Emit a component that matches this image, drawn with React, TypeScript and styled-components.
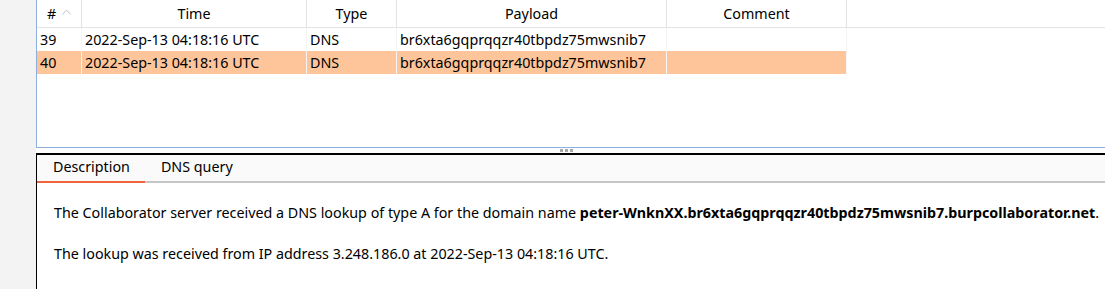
import styled, { createGlobalStyle } from 'styled-components';

const GlobalStyle = createGlobalStyle`
  html, body {
    margin: 0;
    padding: 0;
    background: #ffffff;
  }
  body {
    font-family: "Noto Sans", "Open Sans", sans-serif;
    color: #000000;
  }
`;

type Interaction = {
  id: number;
  time: string;
  type: string;
  payload: string;
  comment: string;
};

const rows: Interaction[] = [
  { id: 39, time: '2022-Sep-13 04:18:16 UTC', type: 'DNS', payload: 'br6xta6gqprqqzr40tbpdz75mwsnib7', comment: '' },
  { id: 40, time: '2022-Sep-13 04:18:16 UTC', type: 'DNS', payload: 'br6xta6gqprqqzr40tbpdz75mwsnib7', comment: '' },
];

const COLUMNS = '45px 225px 90px 270px 180px';

export default function App() {
  const selected = 40;

  return (
    <>
      <GlobalStyle />
      <Page>
        <Gutter />
        <Main>
          <TablePanel>
            <HeaderRow>
              <HeaderCell>
                # <SortArrow width="9" height="6" viewBox="0 0 9 6">
                  <path d="M0.5 5.5 L4.5 1 L8.5 5.5" fill="none" stroke="#c4c4c4" strokeWidth="1" />
                </SortArrow>
              </HeaderCell>
              <HeaderCell>Time</HeaderCell>
              <HeaderCell>Type</HeaderCell>
              <HeaderCell>Payload</HeaderCell>
              <HeaderCell>Comment</HeaderCell>
              <HeaderFiller />
            </HeaderRow>
            {rows.map((r) => (
              <Row key={r.id} $selected={r.id === selected}>
                <Cell>{r.id}</Cell>
                <Cell>{r.time}</Cell>
                <Cell>{r.type}</Cell>
                <Cell>{r.payload}</Cell>
                <Cell>{r.comment}</Cell>
              </Row>
            ))}
          </TablePanel>

          <Splitter>
            <Dot />
            <Dot />
            <Dot />
          </Splitter>

          <DetailPanel>
            <TabBar>
              <Tab $active>Description</Tab>
              <Tab>DNS query</Tab>
            </TabBar>
            <Content>
              <Para>
                The Collaborator server received a DNS lookup of type A for the domain name{' '}
                <b>peter-WnknXX.br6xta6gqprqqzr40tbpdz75mwsnib7.burpcollaborator.net</b>.
              </Para>
              <Para>The lookup was received from IP address 3.248.186.0 at 2022-Sep-13 04:18:16 UTC.</Para>
            </Content>
          </DetailPanel>
        </Main>
      </Page>
    </>
  );
}

const Page = styled('div')`
  display: flex;
  width: 1105px;
  height: 289px;
  overflow: hidden;
`;

const Gutter = styled('div')`
  width: 36px;
  flex-shrink: 0;
  background: #f3f3f3;
`;

const Main = styled('div')`
  flex: 1;
  display: flex;
  flex-direction: column;
  min-width: 0;
`;

const TablePanel = styled('div')`
  height: 147px;
  flex-shrink: 0;
  border-left: 1px solid #8eaedb;
  border-bottom: 1px solid #8eaedb;
  font-size: 14.3px;
`;

const HeaderRow = styled('div')`
  display: grid;
  grid-template-columns: ${COLUMNS} 1fr;
  height: 27px;
  border-bottom: 1px solid #e3e3e3;
`;

const HeaderCell = styled('div')`
  display: flex;
  align-items: center;
  justify-content: center;
  gap: 6px;
  border-right: 1px solid #e3e3e3;
  padding-bottom: 1px;
`;

const HeaderFiller = styled('div')``;

const SortArrow = styled('svg')`
  margin-top: -2px;
`;

const Row = styled('div')<{ $selected?: boolean }>`
  display: grid;
  width: max-content;
  grid-template-columns: ${COLUMNS};
  height: 23px;
  background: ${({ $selected }) => ($selected ? '#ffc59a' : 'transparent')};
`;

const Cell = styled('div')`
  display: flex;
  align-items: center;
  padding-left: 3px;
  border-right: 1px solid #f4f4f4;
  white-space: nowrap;
  overflow: hidden;
`;

const Splitter = styled('div')`
  height: 5px;
  flex-shrink: 0;
  display: flex;
  align-items: center;
  gap: 2px;
  padding-left: 524px;
`;

const Dot = styled('span')`
  width: 3px;
  height: 3px;
  background: #a8a8a8;
`;

const DetailPanel = styled('div')`
  flex: 1;
  border-top: 2px solid #000000;
  border-left: 1px solid #000000;
  display: flex;
  flex-direction: column;
`;

const TabBar = styled('div')`
  display: flex;
  height: 26px;
  background: #fafafa;
  border-bottom: 2px solid #c6c6c6;
  font-size: 14.3px;
`;

const Tab = styled('div')<{ $active?: boolean }>`
  display: flex;
  align-items: center;
  padding: 0 15px 3px 16px;
  margin-bottom: -2px;
  border-bottom: 2px solid ${({ $active }) => ($active ? '#f0633c' : 'transparent')};
`;

const Content = styled('div')`
  padding: 20px 17px 0;
  display: flex;
  flex-direction: column;
  gap: 21px;
  font-size: 14.3px;
`;

const Para = styled('div')`
  line-height: 20px;
  white-space: nowrap;
`;
